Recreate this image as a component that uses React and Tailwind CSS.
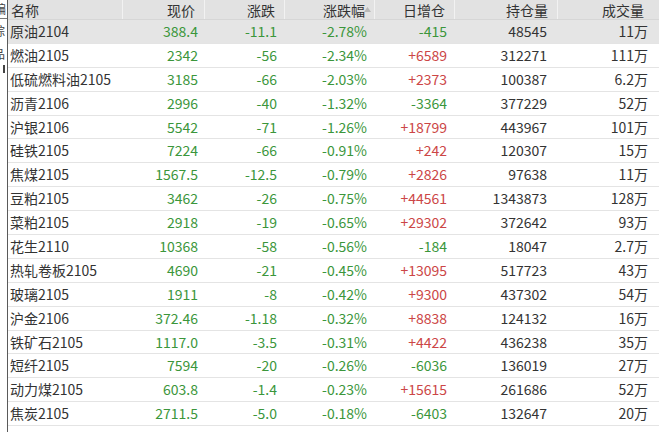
import React from "react";

const rows = [
  ["原油2104", "388.4", "-11.1", "-2.78%", "-415", "48545", "11万"],
  ["燃油2105", "2342", "-56", "-2.34%", "+6589", "312271", "111万"],
  ["低硫燃料油2105", "3185", "-66", "-2.03%", "+2373", "100387", "6.2万"],
  ["沥青2106", "2996", "-40", "-1.32%", "-3364", "377229", "52万"],
  ["沪银2106", "5542", "-71", "-1.26%", "+18799", "443967", "101万"],
  ["硅铁2105", "7224", "-66", "-0.91%", "+242", "120307", "15万"],
  ["焦煤2105", "1567.5", "-12.5", "-0.79%", "+2826", "97638", "11万"],
  ["豆粕2105", "3462", "-26", "-0.75%", "+44561", "1343873", "128万"],
  ["菜粕2105", "2918", "-19", "-0.65%", "+29302", "372642", "93万"],
  ["花生2110", "10368", "-58", "-0.56%", "-184", "18047", "2.7万"],
  ["热轧卷板2105", "4690", "-21", "-0.45%", "+13095", "517723", "43万"],
  ["玻璃2105", "1911", "-8", "-0.42%", "+9300", "437302", "54万"],
  ["沪金2106", "372.46", "-1.18", "-0.32%", "+8838", "124132", "16万"],
  ["铁矿石2105", "1117.0", "-3.5", "-0.31%", "+4422", "436238", "35万"],
  ["短纤2105", "7594", "-20", "-0.26%", "-6036", "136019", "27万"],
  ["动力煤2105", "603.8", "-1.4", "-0.23%", "+15615", "261686", "52万"],
  ["焦炭2105", "2711.5", "-5.0", "-0.18%", "-6403", "132647", "20万"],
];

const cols = "grid grid-cols-[115px_82px_80px_90px_80px_103px_101px]";
const font = { fontFamily: '"Noto Sans CJK SC", "Noto Sans", sans-serif' };

function HeadCell({ children, right = true, arrow = false, last = false }) {
  return (
    <div
      className={`flex items-center h-full ${right ? "justify-end pr-[9px]" : "justify-start pl-[3px]"} ${last ? "" : "border-r border-[#f2f2f2]"} relative`}
    >
      <span>{children}</span>
      {arrow && (
        <svg className="absolute right-[3px] top-[7px]" width="7" height="5" viewBox="0 0 7 5">
          <path d="M0 5 L3.5 0 L7 5 Z" fill="#b8b8b8" />
        </svg>
      )}
    </div>
  );
}

export default function App() {
  return (
    <div className="w-[659px] h-[432px] overflow-hidden bg-white flex text-[14px] text-[#333]" style={font}>
      <div className="w-[8px] h-full flex flex-col border-r border-[#5a5a5a] overflow-hidden bg-white shrink-0">
        <div className="h-[19px] border-b border-[#777] overflow-hidden text-[12px] leading-[18px] text-[#444]">
          <span className="inline-block -ml-[6px]">编</span>
        </div>
        <div className="h-[26px] overflow-hidden text-[12px] leading-[24px] text-[#444]">
          <span className="inline-block -ml-[7px]">综</span>
        </div>
        <div className="h-[20px] overflow-hidden text-[12px] leading-[18px] text-[#444]">
          <span className="inline-block -ml-[7px]">品</span>
        </div>
        <div className="h-[8px] overflow-hidden">
          <div className="ml-[3px] w-[2px] h-[8px] bg-[#444]" />
        </div>
      </div>
      <div className="flex-1 flex flex-col">
        <div className={`${cols} h-[20px] shrink-0 bg-[#e2e2e2] border-b border-[#d6d6d6] leading-none`}>
          <HeadCell right={false}>名称</HeadCell>
          <HeadCell>现价</HeadCell>
          <HeadCell>涨跌</HeadCell>
          <HeadCell arrow>涨跌幅</HeadCell>
          <HeadCell>日增仓</HeadCell>
          <HeadCell>持仓量</HeadCell>
          <HeadCell last>
            <span className="mr-[6px]">成交量</span>
          </HeadCell>
        </div>
        {rows.map((r, i) => {
          const up = r[4].startsWith("+");
          return (
            <div
              key={i}
              className={`${cols} h-[23.9px] shrink-0 items-center border-b border-[#e4e4e4] ${i === 0 ? "bg-[#e5e5e5]" : "bg-white"}`}
            >
              <div className="pl-[2px] whitespace-nowrap">{r[0]}</div>
              <div className="text-right pr-[7px] text-[#3b963b]">{r[1]}</div>
              <div className="text-right pr-[8px] text-[#3b963b]">{r[2]}</div>
              <div className="text-right pr-[8px] text-[#3b963b]">{r[3]}</div>
              <div className={`text-right pr-[8px] ${up ? "text-[#cc4646]" : "text-[#3b963b]"}`}>{r[4]}</div>
              <div className="text-right pr-[11px]">{r[5]}</div>
              <div className="text-right pr-[11px]">{r[6]}</div>
            </div>
          );
        })}
        <div className="flex-1 bg-white" />
      </div>
    </div>
  );
}
